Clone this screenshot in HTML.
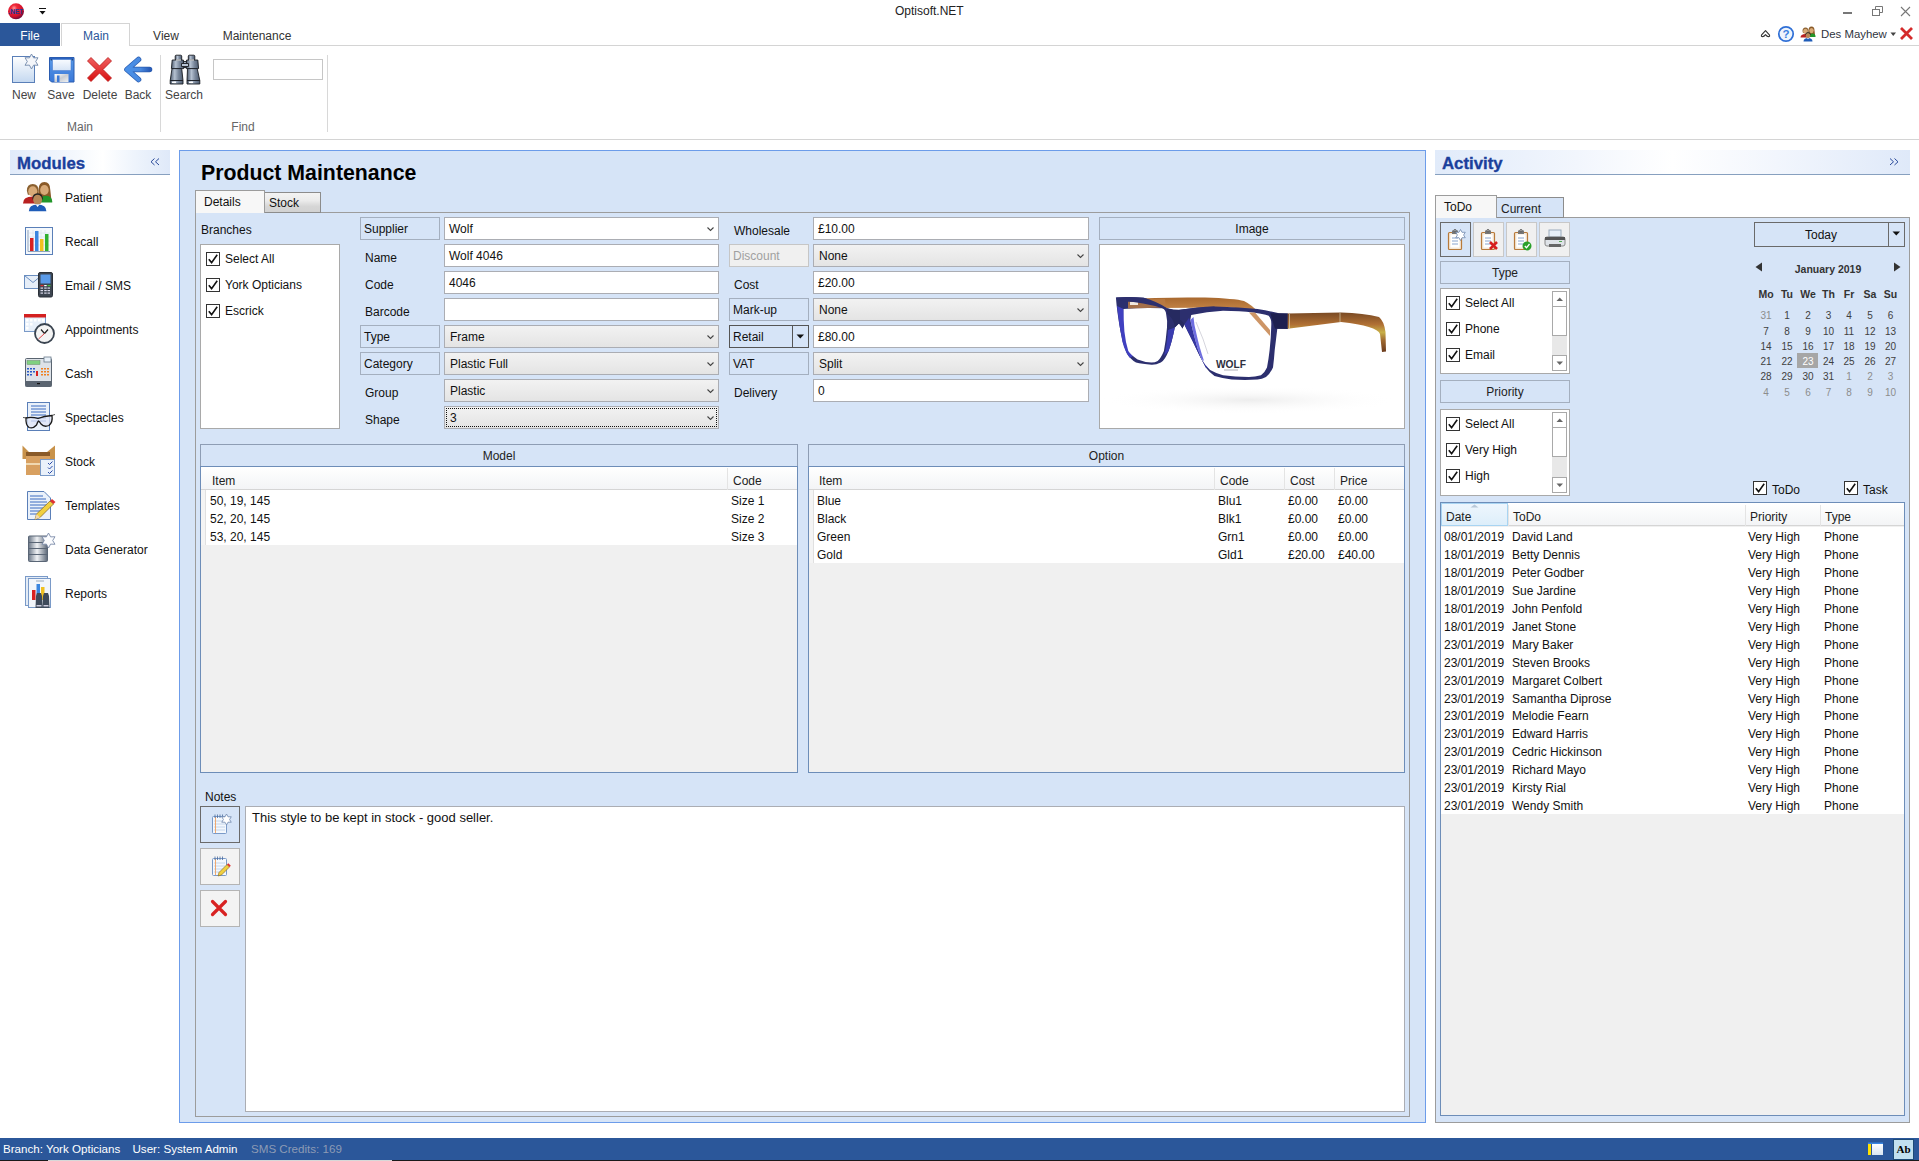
<!DOCTYPE html><html><head><meta charset="utf-8"><style>
html,body{margin:0;padding:0;}
body{width:1919px;height:1161px;position:relative;overflow:hidden;background:#fff;font-family:"Liberation Sans",sans-serif;}
div{position:absolute;box-sizing:border-box;}
.t{white-space:nowrap;font-family:"Liberation Sans",sans-serif;}
svg{overflow:visible}
</style></head><body>
<svg style="position:absolute;left:7px;top:1.5px" width="19" height="19" viewBox="0 0 19 19">
<defs><radialGradient id="gapp" cx="0.38" cy="0.3" r="0.75"><stop offset="0" stop-color="#ff9aa0"/><stop offset="0.25" stop-color="#f02a3a"/><stop offset="0.7" stop-color="#d0102a"/><stop offset="1" stop-color="#5a0a40"/></radialGradient></defs>
<circle cx="9" cy="9.3" r="8" fill="url(#gapp)"/>
<text x="8.8" y="12.2" font-family="Liberation Sans" font-size="7" font-weight="bold" fill="#24389a" text-anchor="middle" textLength="15" lengthAdjust="spacingAndGlyphs">.NET</text></svg>
<svg style="position:absolute;left:39px;top:8px" width="8" height="8" viewBox="0 0 8 8"><rect x="0" y="0" width="7" height="1" fill="#111"/><path d="M0.5 3 L6.5 3 L3.5 6.5 Z" fill="#111"/></svg>
<div class="t" style="left:895px;top:4.34px;font-size:12px;line-height:15px;color:#222;font-weight:normal;">Optisoft.NET</div>
<div style="left:1843px;top:12px;width:9px;height:2px;background:#777"></div>
<svg style="position:absolute;left:1872px;top:6px" width="11" height="11" viewBox="0 0 11 11"><rect x="0.5" y="3.5" width="7" height="6" fill="none" stroke="#777"/><path d="M3.5 3.5 V0.5 H10.5 V6.5 H7.5" fill="none" stroke="#777"/></svg>
<svg style="position:absolute;left:1900px;top:6px" width="12" height="11" viewBox="0 0 12 11"><path d="M1 1 L10 10 M10 1 L1 10" stroke="#777" stroke-width="1.1"/></svg>
<div style="left:0px;top:23px;width:60px;height:23px;background:#2b579a"></div>
<div class="t" style="left:0.0px;width:60px;text-align:center;top:29.34px;font-size:12px;line-height:15px;color:#fff;font-weight:normal;">File</div>
<div style="left:61px;top:23px;width:69px;height:23px;background:#fff;border:1px solid #d4d4d4;border-bottom:none"></div>
<div class="t" style="left:62.0px;width:68px;text-align:center;top:29.34px;font-size:12px;line-height:15px;color:#2b579a;font-weight:normal;">Main</div>
<div class="t" style="left:136.0px;width:60px;text-align:center;top:29.34px;font-size:12px;line-height:15px;color:#333;font-weight:normal;">View</div>
<div class="t" style="left:207.0px;width:100px;text-align:center;top:29.34px;font-size:12px;line-height:15px;color:#333;font-weight:normal;">Maintenance</div>
<div style="left:130px;top:45px;width:1789px;height:1px;background:#d4d4d4"></div>
<svg style="position:absolute;left:1760px;top:29px" width="12" height="10" viewBox="0 0 12 10"><path d="M1.6 5.9 L5.5 1.6 L9.4 5.9 Q10.2 7.6 8.4 7.6 Q7 7.6 5.5 5.6 Q4 7.6 2.6 7.6 Q0.8 7.6 1.6 5.9Z" fill="#fff" stroke="#333" stroke-width="1.1" stroke-linejoin="round"/></svg>
<svg style="position:absolute;left:1777px;top:25px" width="18" height="18" viewBox="0 0 18 18"><circle cx="9" cy="9" r="7.2" fill="#eef4fc" stroke="#2f6fd6" stroke-width="1.7"/><text x="9" y="13.3" font-family="Liberation Sans" font-size="11.5" font-weight="bold" fill="#3a7ee0" text-anchor="middle">?</text></svg>
<svg style="position:absolute;left:1800px;top:26px" width="16" height="16" viewBox="0 0 16 16"><path d="M2.5 5 Q2.5 1.5 5.5 1.5 Q8.5 1.5 8.5 5 L8 7 H3Z" fill="#8a6030"/><ellipse cx="5.5" cy="5.3" rx="2.3" ry="2.6" fill="#d8aa78"/><path d="M0.5 11.5 Q0.5 8 5.5 8 Q9 8 10 10 L9 11.5Z" fill="#b82020"/>
<path d="M8.5 4.5 Q8.5 0.5 11.5 0.5 Q14.5 0.5 14.5 4.5 L15 9 H8Z" fill="#8a5a28"/><ellipse cx="11.5" cy="4.6" rx="2.2" ry="2.6" fill="#d8aa78"/><path d="M9 10.5 Q10 7.5 12 7.5 Q15.5 7.5 15.5 10.5 V11H9Z" fill="#22962a"/>
<path d="M5.3 9.5 Q5.3 6.3 8 6.3 Q10.7 6.3 10.7 9.5Z" fill="#222"/><ellipse cx="8" cy="9.6" rx="2.3" ry="2.5" fill="#b88858"/><path d="M3.5 15.5 Q3.5 12 8 12 Q12.5 12 12.5 15.5Z" fill="#1f5cb8"/><path d="M7 12.1 L8 13.3 L9 12.1Z" fill="#fff"/></svg>
<div class="t" style="left:1821px;top:27.05px;font-size:11.4px;line-height:14px;color:#2f3440;font-weight:normal;">Des Mayhew</div>
<svg style="position:absolute;left:1890px;top:32px" width="7" height="5" viewBox="0 0 7 5"><path d="M0.5 0.5 H6 L3.25 4 Z" fill="#444"/></svg>
<svg style="position:absolute;left:1899px;top:26px" width="15" height="15" viewBox="0 0 15 15"><path d="M2 2 L13 13 M13 2 L2 13" stroke="#d42a2a" stroke-width="2.8"/></svg>
<div style="left:0px;top:139px;width:1919px;height:1px;background:#d4d4d4"></div>
<svg style="position:absolute;left:11px;top:53px" width="30" height="32" viewBox="0 0 30 32"><defs><linearGradient id="gnew" x1="0" y1="0" x2="0" y2="1"><stop offset="0" stop-color="#ffffff"/><stop offset="1" stop-color="#c4d8f0"/></linearGradient></defs>
<rect x="1.5" y="3.5" width="22" height="26" fill="url(#gnew)" stroke="#5a7fb8"/>
<path d="M20.50 1.00 L22.60 4.86 L27.00 4.75 L24.70 8.50 L27.00 12.25 L22.60 12.14 L20.50 16.00 L18.40 12.14 L14.00 12.25 L16.30 8.50 L14.00 4.75 L18.40 4.86Z" fill="#f4f6fa" stroke="#7088aa" stroke-width="0.9"/></svg>
<div class="t" style="left:4.0px;width:40px;text-align:center;top:88.34px;font-size:12px;line-height:15px;color:#444;font-weight:normal;">New</div>
<svg style="position:absolute;left:48px;top:56px" width="28" height="28" viewBox="0 0 28 28"><defs><linearGradient id="gsv" x1="0" y1="0" x2="0" y2="1"><stop offset="0" stop-color="#5a9ae8"/><stop offset="1" stop-color="#3a78d8"/></linearGradient>
<linearGradient id="gsvl" x1="0" y1="0" x2="0" y2="1"><stop offset="0" stop-color="#f8fbff"/><stop offset="1" stop-color="#d6e4f6"/></linearGradient>
<linearGradient id="gsvs" x1="0" y1="0" x2="1" y2="1"><stop offset="0" stop-color="#ffffff"/><stop offset="0.5" stop-color="#c8ccd2"/><stop offset="1" stop-color="#f0f2f4"/></linearGradient></defs>
<path d="M1.5 1.5 H26 V26 H3.5 L1.5 24Z" fill="url(#gsv)" stroke="#2a5cb0" stroke-width="1"/><rect x="2" y="2" width="23.5" height="1.6" fill="#2a62c0"/>
<rect x="4.5" y="3.6" width="18.5" height="11" fill="url(#gsvl)" stroke="#3a70c8" stroke-width="0.5"/>
<rect x="6.5" y="18" width="14" height="8" fill="url(#gsvs)"/><rect x="9" y="19.5" width="2.5" height="6.5" fill="#3a78d8"/>
<circle cx="3.3" cy="3.8" r="0.6" fill="#123"/><circle cx="24.3" cy="3.8" r="0.6" fill="#123"/></svg>
<div class="t" style="left:41.0px;width:40px;text-align:center;top:88.34px;font-size:12px;line-height:15px;color:#444;font-weight:normal;">Save</div>
<svg style="position:absolute;left:86px;top:56px" width="28" height="28" viewBox="0 0 28 28"><defs><linearGradient id="gdel" x1="0" y1="0" x2="0" y2="1"><stop offset="0" stop-color="#f06060"/><stop offset="1" stop-color="#d81010"/></linearGradient></defs><path d="M1.5 5 L5 1.5 L13.5 10 L22 1.5 L25.5 5 L17 13.5 L25.5 22 L22 25.5 L13.5 17 L5 25.5 L1.5 22 L10 13.5Z" fill="url(#gdel)" stroke="#b81818" stroke-width="0.8" stroke-linejoin="round"/></svg>
<div class="t" style="left:75.0px;width:50px;text-align:center;top:88.34px;font-size:12px;line-height:15px;color:#444;font-weight:normal;">Delete</div>
<svg style="position:absolute;left:123px;top:56px" width="30" height="28" viewBox="0 0 30 28"><defs><linearGradient id="gback" x1="0" y1="0" x2="1" y2="0"><stop offset="0" stop-color="#4a90e8"/><stop offset="0.6" stop-color="#4a8ae0"/><stop offset="1" stop-color="#2a5cb8"/></linearGradient></defs><path d="M26.5 13.5 H5 M15.5 3.5 L4 13.5 L15.5 23.5" fill="none" stroke="#2a5cb0" stroke-width="5.6" stroke-linecap="round" stroke-linejoin="round"/><path d="M26.5 13.5 H5 M15.5 3.5 L4 13.5 L15.5 23.5" fill="none" stroke="url(#gback)" stroke-width="4.2" stroke-linecap="round" stroke-linejoin="round"/></svg>
<div class="t" style="left:118.0px;width:40px;text-align:center;top:88.34px;font-size:12px;line-height:15px;color:#444;font-weight:normal;">Back</div>
<div style="left:160px;top:55px;width:1px;height:77px;background:#d8d8d8"></div>
<div class="t" style="left:50.0px;width:60px;text-align:center;top:120.34px;font-size:12px;line-height:15px;color:#666;font-weight:normal;">Main</div>
<svg style="position:absolute;left:169px;top:54px" width="33" height="32" viewBox="0 0 33 32"><defs><linearGradient id="gbin" x1="0" y1="0" x2="1" y2="0"><stop offset="0" stop-color="#4e5c70"/><stop offset="0.35" stop-color="#b4c0d0"/><stop offset="0.65" stop-color="#7a889c"/><stop offset="1" stop-color="#4e5c70"/></linearGradient></defs>
<g stroke="#1a1d22" stroke-width="0.9" stroke-linejoin="round">
<rect x="6.2" y="1.2" width="6.5" height="5" rx="1" fill="url(#gbin)"/><rect x="19.3" y="1.2" width="6.5" height="5" rx="1" fill="url(#gbin)"/>
<path d="M11 7.5 H21 V13.5 H11Z" fill="#9aa8ba"/>
<path d="M3.2 6 H14.4 L14.8 14.6 H2.4Z" fill="url(#gbin)"/><path d="M17.6 6 H28.8 L29.6 14.6 H17.2Z" fill="url(#gbin)"/>
<path d="M12.5 9.5 H19.5 V12.5 H12.5Z" fill="#b8c4d4"/>
<path d="M3 14.6 H12.7 L14 26.5 H1.2Z" fill="url(#gbin)"/><path d="M18.5 14.6 H28.2 L30.8 26.5 H18Z" fill="url(#gbin)"/>
<path d="M1.2 26.5 H14 V30 H1.2Z" fill="url(#gbin)"/><path d="M18 26.5 H30.8 V30 H18Z" fill="url(#gbin)"/>
</g>
<rect x="3" y="27.6" width="4" height="1.4" fill="#fff"/><rect x="20" y="27.6" width="4" height="1.4" fill="#fff"/>
<rect x="7" y="5.5" width="5" height="1" fill="#fff"/><rect x="20" y="5.5" width="5" height="1" fill="#fff"/></svg>
<div class="t" style="left:159.0px;width:50px;text-align:center;top:88.34px;font-size:12px;line-height:15px;color:#444;font-weight:normal;">Search</div>
<div style="left:213px;top:59px;width:110px;height:21px;background:#fff;border:1px solid #c6c6c6;box-sizing:border-box"></div>
<div style="left:327px;top:55px;width:1px;height:77px;background:#d8d8d8"></div>
<div class="t" style="left:213.0px;width:60px;text-align:center;top:120.34px;font-size:12px;line-height:15px;color:#666;font-weight:normal;">Find</div>
<div style="left:10px;top:150px;width:160px;height:25px;background:linear-gradient(90deg,#e1ebfa 0%,#f4f8fd 40%,#ffffff 58%,#eef4fc 78%,#dfe9f9 100%);border-bottom:1px solid #87a0bf"></div>
<div class="t" style="left:17px;top:153.18px;font-size:16.8px;line-height:21px;color:#1b3f9c;font-weight:bold;-webkit-text-stroke:0.35px #1b3f9c;">Modules</div>
<svg style="position:absolute;left:150px;top:158px" width="11" height="8" viewBox="0 0 11 8"><path d="M4.5 0.5 L1 3.8 L4.5 7 M9 0.5 L5.5 3.8 L9 7" fill="none" stroke="#2a4a9a" stroke-width="1"/></svg>
<svg style="position:absolute;left:22px;top:181px" width="33" height="32" viewBox="0 0 33 32"><g transform="scale(1.95)"><path d="M2.5 5 Q2.5 1.5 5.5 1.5 Q8.5 1.5 8.5 5 L8 7 H3Z" fill="#8a6030"/><ellipse cx="5.5" cy="5.3" rx="2.3" ry="2.6" fill="#d8aa78"/><path d="M0.5 11.5 Q0.5 8 5.5 8 Q9 8 10 10 L9 11.5Z" fill="#b82020"/>
<path d="M8.5 4.5 Q8.5 0.5 11.5 0.5 Q14.5 0.5 14.5 4.5 L15 9 H8Z" fill="#8a5a28"/><ellipse cx="11.5" cy="4.6" rx="2.2" ry="2.6" fill="#d8aa78"/><path d="M9 10.5 Q10 7.5 12 7.5 Q15.5 7.5 15.5 10.5 V11H9Z" fill="#22962a"/>
<path d="M5.3 9.5 Q5.3 6.3 8 6.3 Q10.7 6.3 10.7 9.5Z" fill="#222"/><ellipse cx="8" cy="9.6" rx="2.3" ry="2.5" fill="#b88858"/><path d="M3.5 15.5 Q3.5 12 8 12 Q12.5 12 12.5 15.5Z" fill="#1f5cb8"/><path d="M7 12.1 L8 13.3 L9 12.1Z" fill="#fff"/></g></svg>
<div class="t" style="left:65px;top:191.34px;font-size:12px;line-height:15px;color:#111;font-weight:normal;">Patient</div>
<svg style="position:absolute;left:25px;top:227px" width="28" height="28" viewBox="0 0 28 28"><rect x="0.5" y="0.5" width="27" height="27" fill="#f4f8fc" stroke="#5a7fb8"/>
<path d="M3 3 V24.5 H25" fill="none" stroke="#8fa3bd"/>
<g stroke="#dde6f0" stroke-width="0.8"><path d="M4 6H25M4 10H25M4 14H25M4 18H25M8 3V24M12 3V24M16 3V24M20 3V24"/></g>
<rect x="5" y="11" width="3.5" height="13" fill="#d82020"/><rect x="10" y="4" width="3.5" height="20" fill="#3a86e0"/><rect x="15" y="12" width="3.5" height="12" fill="#f0c020"/><rect x="20" y="7" width="3.5" height="17" fill="#30b030"/></svg>
<div class="t" style="left:65px;top:235.34px;font-size:12px;line-height:15px;color:#111;font-weight:normal;">Recall</div>
<svg style="position:absolute;left:23px;top:272px" width="32" height="26" viewBox="0 0 32 26"><rect x="1.5" y="3.5" width="17" height="13" fill="#e6eef8" stroke="#6a8ec0"/><path d="M1.5 3.5 L10 10.5 L18.5 3.5" fill="none" stroke="#6a8ec0"/>
<rect x="15.5" y="0.5" width="14" height="24.5" rx="1.5" fill="#3d4550" stroke="#2a3038"/><rect x="17.5" y="2.5" width="10" height="9" fill="#5a9ae8"/>
<rect x="17.5" y="13" width="3" height="1.2" fill="#e03030"/><rect x="21.2" y="13" width="2.5" height="1.2" fill="#fff"/><rect x="24.5" y="13" width="3" height="1.2" fill="#40c040"/>
<g fill="#dde"><rect x="17.5" y="15.5" width="2.5" height="1.2"/><rect x="21.2" y="15.5" width="2.5" height="1.2"/><rect x="24.5" y="15.5" width="2.5" height="1.2"/><rect x="17.5" y="18" width="2.5" height="1.2"/><rect x="21.2" y="18" width="2.5" height="1.2"/><rect x="24.5" y="18" width="2.5" height="1.2"/><rect x="17.5" y="20.5" width="2.5" height="1.2"/><rect x="21.2" y="20.5" width="2.5" height="1.2"/><rect x="24.5" y="20.5" width="2.5" height="1.2"/></g></svg>
<div class="t" style="left:65px;top:279.34px;font-size:12px;line-height:15px;color:#111;font-weight:normal;">Email / SMS</div>
<svg style="position:absolute;left:23px;top:313px" width="32" height="32" viewBox="0 0 32 32"><rect x="1.5" y="1.5" width="21" height="17" fill="#e8f0fa" stroke="#7a9ac8"/><rect x="1" y="1" width="22" height="3.5" fill="#d42020"/>
<g fill="#fff"><rect x="3" y="6" width="2.5" height="2.5"/><rect x="7" y="6" width="2.5" height="2.5"/><rect x="11" y="6" width="2.5" height="2.5"/><rect x="15" y="6" width="2.5" height="2.5"/><rect x="19" y="6" width="2.5" height="2.5"/><rect x="3" y="10" width="2.5" height="2.5"/><rect x="7" y="10" width="2.5" height="2.5"/><rect x="3" y="14" width="2.5" height="2.5"/></g>
<circle cx="21.5" cy="20.5" r="9.5" fill="#f4f4f4" stroke="#3a4450" stroke-width="1.8"/><path d="M21.5 20.5 L18 16.5 M21.5 20.5 L25 16.5" stroke="#222" stroke-width="1.2"/><path d="M21.5 20.5 L15.5 26" stroke="#e03030" stroke-width="0.9"/></svg>
<div class="t" style="left:65px;top:323.34px;font-size:12px;line-height:15px;color:#111;font-weight:normal;">Appointments</div>
<svg style="position:absolute;left:24px;top:357px" width="30" height="31" viewBox="0 0 30 31"><rect x="1.5" y="1.5" width="26" height="28" rx="1" fill="#dde2e8" stroke="#5a6470"/><rect x="20" y="0" width="7" height="5" fill="#e8f0f8" stroke="#6a7a8a" stroke-width="0.8"/>
<rect x="3" y="3.5" width="13" height="4" fill="#80d080" stroke="#6a8a6a" stroke-width="0.5"/><rect x="1.5" y="24" width="26" height="5.5" fill="#5a6470"/><rect x="13" y="26" width="3" height="1.2" fill="#111"/>
<g fill="#2a5ac8"><rect x="3" y="11" width="2" height="1.5"/><rect x="6" y="11" width="2" height="1.5"/><rect x="9" y="11" width="2" height="1.5"/><rect x="3" y="14" width="2" height="1.5"/><rect x="6" y="14" width="2" height="1.5"/><rect x="9" y="14" width="2" height="1.5"/><rect x="3" y="17" width="2" height="1.5"/><rect x="6" y="17" width="2" height="1.5"/></g>
<rect x="12" y="14" width="2" height="5" fill="#d82020"/>
<g fill="#f08020"><rect x="17" y="11" width="2" height="1.5"/><rect x="20" y="11" width="2" height="1.5"/><rect x="23" y="11" width="2" height="1.5"/><rect x="17" y="14" width="2" height="1.5"/><rect x="20" y="14" width="2" height="1.5"/><rect x="23" y="14" width="2" height="1.5"/><rect x="17" y="17" width="2" height="1.5"/><rect x="20" y="17" width="2" height="1.5"/><rect x="23" y="17" width="2" height="1.5"/></g></svg>
<div class="t" style="left:65px;top:367.34px;font-size:12px;line-height:15px;color:#111;font-weight:normal;">Cash</div>
<svg style="position:absolute;left:22px;top:402px" width="34" height="30" viewBox="0 0 34 30"><rect x="5.5" y="0.5" width="22" height="28" fill="#eaf1fa" stroke="#5a7fb8"/>
<g stroke="#3a6ac0" stroke-width="1"><path d="M9 4H24M9 7H24M9 10H24M9 13H24M9 16H24M9 19H24"/></g>
<path d="M1 15.5 L5 16 M28 14 L33 12.5" stroke="#555" stroke-width="1"/>
<path d="M4 16 Q10 14.5 16 16.5 Q22 14 30 13.5 Q31 20 27 23.5 Q22 25.5 19 22 Q17.5 19.5 16.5 19 Q15.5 20 14.5 23 Q11 27 7 25.5 Q3.5 23 4 16Z" fill="#dfe4f6" fill-opacity="0.75" stroke="#1a1a1a" stroke-width="1.3" stroke-linejoin="round"/></svg>
<div class="t" style="left:65px;top:411.34px;font-size:12px;line-height:15px;color:#111;font-weight:normal;">Spectacles</div>
<svg style="position:absolute;left:22px;top:445px" width="34" height="31" viewBox="0 0 34 31"><path d="M0.5 0.5 L7 7 H25 L33 0.5 V14 H0.5Z" fill="#c8924a"/><rect x="4" y="7" width="24" height="23" fill="#d8a060"/><rect x="4" y="7" width="24" height="4" fill="#8a5a28"/>
<rect x="4" y="18" width="24" height="2" fill="#f0d8b0"/>
<rect x="18.5" y="14.5" width="14" height="16" fill="#eaf1fa" stroke="#7a9ac8"/><path d="M26 18 l1.5 1.5 l3-3 M26 22.5 l1.5 1.5 l3-3 M26 27 l1.5 1.5 l3-3" fill="none" stroke="#2a4aa8" stroke-width="1"/></svg>
<div class="t" style="left:65px;top:455.34px;font-size:12px;line-height:15px;color:#111;font-weight:normal;">Stock</div>
<svg style="position:absolute;left:26px;top:490px" width="30" height="31" viewBox="0 0 30 31"><path d="M1.5 1.5 H18 L24.5 8 V29.5 H1.5Z" fill="#eaf1fa" stroke="#5a7fb8"/>
<g stroke="#3a6ac0" stroke-width="1"><path d="M4 6H17M4 9H20M4 12H21M4 15H21M4 18H21M4 21H15M4 24H12"/></g>
<path d="M9 29.5 L10.5 24 L24 11 L27.5 14 L14 27.5 Z" fill="#f0d040" stroke="#806020" stroke-width="0.7"/><path d="M24 11 L26 9 L29.5 12 L27.5 14Z" fill="#e03030"/><path d="M9 29.5 L10.5 24 L14 27.5Z" fill="#f0d8b0"/></svg>
<div class="t" style="left:65px;top:499.34px;font-size:12px;line-height:15px;color:#111;font-weight:normal;">Templates</div>
<svg style="position:absolute;left:27px;top:532px" width="30" height="31" viewBox="0 0 30 31"><defs><linearGradient id="gdb" x1="0" y1="0" x2="1" y2="0"><stop offset="0" stop-color="#6a7686"/><stop offset="0.45" stop-color="#f0f2f5"/><stop offset="1" stop-color="#5a6676"/></linearGradient></defs>
<rect x="1.5" y="4" width="19" height="25.5" rx="1" fill="url(#gdb)" stroke="#5a6676"/><path d="M1.5 10.5H20.5M1.5 16.5H20.5M1.5 22.5H20.5" stroke="#5a6676" stroke-width="1.2"/>
<path d="M21.50 1.00 L23.60 4.86 L28.00 4.75 L25.70 8.50 L28.00 12.25 L23.60 12.14 L21.50 16.00 L19.40 12.14 L15.00 12.25 L17.30 8.50 L15.00 4.75 L19.40 4.86Z" fill="#fbfcfe" stroke="#7a8aa8" stroke-width="0.9"/></svg>
<div class="t" style="left:65px;top:543.34px;font-size:12px;line-height:15px;color:#111;font-weight:normal;">Data Generator</div>
<svg style="position:absolute;left:25px;top:576px" width="30" height="33" viewBox="0 0 30 33"><rect x="0.5" y="0.5" width="22" height="29" fill="#e4ecf6" stroke="#7a9ac8"/><rect x="3.5" y="2.5" width="22" height="29" fill="#f2f6fb" stroke="#7a9ac8"/>
<rect x="7" y="14" width="3.5" height="10" fill="#d82020"/><rect x="11.5" y="8" width="3.5" height="16" fill="#3a86e0"/><rect x="16" y="11" width="3.5" height="13" fill="#f0c020"/><rect x="11" y="4.5" width="8" height="1" fill="#9ab"/>
<path d="M11 20 L12 17 H16 L17 20 L17.5 32 H10.5Z M18 20 L19 17 H23 L24 20 L24.5 32 H17.5Z" fill="#3e4a5a"/><rect x="11.5" y="29" width="5" height="1.5" fill="#ccd"/><rect x="18.5" y="29" width="5" height="1.5" fill="#ccd"/></svg>
<div class="t" style="left:65px;top:587.34px;font-size:12px;line-height:15px;color:#111;font-weight:normal;">Reports</div>
<div style="left:179px;top:150px;width:1247px;height:973px;background:#d6e4f7;border:1px solid #6c9cea"></div>
<div class="t" style="left:201px;top:160.12px;font-size:21.3px;line-height:27px;color:#000;font-weight:bold;">Product Maintenance</div>
<div style="left:195px;top:212px;width:1215px;height:905px;border:1px solid #9c9c9c"></div>
<div style="left:264px;top:192px;width:57px;height:21px;background:linear-gradient(#f3f3f3 0%,#ebebeb 40%,#d6d6d6 70%,#d2d2d2 100%);border:1px solid #8c8c8c"></div>
<div class="t" style="left:269px;top:196.34px;font-size:12px;line-height:15px;color:#111;font-weight:normal;">Stock</div>
<div style="left:195px;top:190px;width:70px;height:23px;background:#f7f7f7;border:1px solid #9c9c9c;border-bottom:none"></div>
<div class="t" style="left:204px;top:195.34px;font-size:12px;line-height:15px;color:#111;font-weight:normal;">Details</div>
<div class="t" style="left:201px;top:223.34px;font-size:12px;line-height:15px;color:#111;font-weight:normal;">Branches</div>
<div style="left:200px;top:244px;width:140px;height:185px;background:#fff;border:1px solid #a9a9a9"></div>
<svg style="position:absolute;left:206px;top:252px" width="14" height="14" viewBox="0 0 14 14"><rect x="0.5" y="0.5" width="13" height="13" fill="#fff" stroke="#333"/><path d="M2.8 7.2 L5.6 10.6 L11.2 2.8" fill="none" stroke="#111" stroke-width="1.6"/></svg>
<div class="t" style="left:225px;top:252.34px;font-size:12px;line-height:15px;color:#111;font-weight:normal;">Select All</div>
<svg style="position:absolute;left:206px;top:278px" width="14" height="14" viewBox="0 0 14 14"><rect x="0.5" y="0.5" width="13" height="13" fill="#fff" stroke="#333"/><path d="M2.8 7.2 L5.6 10.6 L11.2 2.8" fill="none" stroke="#111" stroke-width="1.6"/></svg>
<div class="t" style="left:225px;top:278.34px;font-size:12px;line-height:15px;color:#111;font-weight:normal;">York Opticians</div>
<svg style="position:absolute;left:206px;top:304px" width="14" height="14" viewBox="0 0 14 14"><rect x="0.5" y="0.5" width="13" height="13" fill="#fff" stroke="#333"/><path d="M2.8 7.2 L5.6 10.6 L11.2 2.8" fill="none" stroke="#111" stroke-width="1.6"/></svg>
<div class="t" style="left:225px;top:304.34px;font-size:12px;line-height:15px;color:#111;font-weight:normal;">Escrick</div>
<div style="left:360px;top:217px;width:80px;height:23px;background:#d6e4f7;border:1px solid #a4afbf"></div>
<div class="t" style="left:364px;top:222.34px;font-size:12px;line-height:15px;color:#111;font-weight:normal;">Supplier</div>
<div style="left:444px;top:217px;width:275px;height:23px;background:#fff;border:1px solid #abadb3"></div>
<div class="t" style="left:449px;top:222.34px;font-size:12px;line-height:15px;color:#111;font-weight:normal;">Wolf</div>
<svg style="position:absolute;left:707px;top:227px" width="8" height="5" viewBox="0 0 8 5"><path d="M0.5 0.5 L3.5 3.5 L6.5 0.5" fill="none" stroke="#444" stroke-width="1.1"/></svg>
<div class="t" style="left:365px;top:251.34px;font-size:12px;line-height:15px;color:#111;font-weight:normal;">Name</div>
<div style="left:444px;top:244px;width:275px;height:23px;background:#fff;border:1px solid #abadb3"></div>
<div class="t" style="left:449px;top:249.34px;font-size:12px;line-height:15px;color:#111;font-weight:normal;">Wolf 4046</div>
<div class="t" style="left:365px;top:278.34px;font-size:12px;line-height:15px;color:#111;font-weight:normal;">Code</div>
<div style="left:444px;top:271px;width:275px;height:23px;background:#fff;border:1px solid #abadb3"></div>
<div class="t" style="left:449px;top:276.34px;font-size:12px;line-height:15px;color:#111;font-weight:normal;">4046</div>
<div class="t" style="left:365px;top:305.34px;font-size:12px;line-height:15px;color:#111;font-weight:normal;">Barcode</div>
<div style="left:444px;top:298px;width:275px;height:23px;background:#fff;border:1px solid #abadb3"></div>
<div style="left:360px;top:325px;width:80px;height:23px;background:#d6e4f7;border:1px solid #a4afbf"></div>
<div class="t" style="left:364px;top:330.34px;font-size:12px;line-height:15px;color:#111;font-weight:normal;">Type</div>
<div style="left:444px;top:325px;width:275px;height:23px;background:linear-gradient(#f2f2f2,#e4e4e4);border:1px solid #abadb3"></div>
<div class="t" style="left:450px;top:330.34px;font-size:12px;line-height:15px;color:#111;font-weight:normal;">Frame</div>
<svg style="position:absolute;left:707px;top:335px" width="8" height="5" viewBox="0 0 8 5"><path d="M0.5 0.5 L3.5 3.5 L6.5 0.5" fill="none" stroke="#444" stroke-width="1.1"/></svg>
<div style="left:360px;top:352px;width:80px;height:23px;background:#d6e4f7;border:1px solid #a4afbf"></div>
<div class="t" style="left:364px;top:357.34px;font-size:12px;line-height:15px;color:#111;font-weight:normal;">Category</div>
<div style="left:444px;top:352px;width:275px;height:23px;background:linear-gradient(#f2f2f2,#e4e4e4);border:1px solid #abadb3"></div>
<div class="t" style="left:450px;top:357.34px;font-size:12px;line-height:15px;color:#111;font-weight:normal;">Plastic Full</div>
<svg style="position:absolute;left:707px;top:362px" width="8" height="5" viewBox="0 0 8 5"><path d="M0.5 0.5 L3.5 3.5 L6.5 0.5" fill="none" stroke="#444" stroke-width="1.1"/></svg>
<div class="t" style="left:365px;top:386.34px;font-size:12px;line-height:15px;color:#111;font-weight:normal;">Group</div>
<div style="left:444px;top:379px;width:275px;height:23px;background:linear-gradient(#f2f2f2,#e4e4e4);border:1px solid #abadb3"></div>
<div class="t" style="left:450px;top:384.34px;font-size:12px;line-height:15px;color:#111;font-weight:normal;">Plastic</div>
<svg style="position:absolute;left:707px;top:389px" width="8" height="5" viewBox="0 0 8 5"><path d="M0.5 0.5 L3.5 3.5 L6.5 0.5" fill="none" stroke="#444" stroke-width="1.1"/></svg>
<div class="t" style="left:365px;top:413.34px;font-size:12px;line-height:15px;color:#111;font-weight:normal;">Shape</div>
<div style="left:444px;top:406px;width:275px;height:23px;background:linear-gradient(#f2f2f2,#e4e4e4);border:1px solid #abadb3"></div>
<div style="left:446px;top:408px;width:271px;height:19px;border:1px dotted #111"></div>
<div class="t" style="left:450px;top:411.34px;font-size:12px;line-height:15px;color:#111;font-weight:normal;">3</div>
<svg style="position:absolute;left:707px;top:416px" width="8" height="5" viewBox="0 0 8 5"><path d="M0.5 0.5 L3.5 3.5 L6.5 0.5" fill="none" stroke="#444" stroke-width="1.1"/></svg>
<div class="t" style="left:734px;top:224.34px;font-size:12px;line-height:15px;color:#111;font-weight:normal;">Wholesale</div>
<div style="left:813px;top:217px;width:276px;height:23px;background:#fff;border:1px solid #abadb3"></div>
<div class="t" style="left:818px;top:222.34px;font-size:12px;line-height:15px;color:#111;font-weight:normal;">£10.00</div>
<div style="left:729px;top:244px;width:80px;height:23px;background:#f0f0f0;border:1px solid #c6c6c6"></div>
<div class="t" style="left:733px;top:249.34px;font-size:12px;line-height:15px;color:#a0a0a0;font-weight:normal;">Discount</div>
<div style="left:813px;top:244px;width:276px;height:23px;background:linear-gradient(#f2f2f2,#e4e4e4);border:1px solid #abadb3"></div>
<div class="t" style="left:819px;top:249.34px;font-size:12px;line-height:15px;color:#111;font-weight:normal;">None</div>
<svg style="position:absolute;left:1077px;top:254px" width="8" height="5" viewBox="0 0 8 5"><path d="M0.5 0.5 L3.5 3.5 L6.5 0.5" fill="none" stroke="#444" stroke-width="1.1"/></svg>
<div class="t" style="left:734px;top:278.34px;font-size:12px;line-height:15px;color:#111;font-weight:normal;">Cost</div>
<div style="left:813px;top:271px;width:276px;height:23px;background:#fff;border:1px solid #abadb3"></div>
<div class="t" style="left:818px;top:276.34px;font-size:12px;line-height:15px;color:#111;font-weight:normal;">£20.00</div>
<div style="left:729px;top:298px;width:80px;height:23px;background:#d6e4f7;border:1px solid #a4afbf"></div>
<div class="t" style="left:733px;top:303.34px;font-size:12px;line-height:15px;color:#111;font-weight:normal;">Mark-up</div>
<div style="left:813px;top:298px;width:276px;height:23px;background:linear-gradient(#f2f2f2,#e4e4e4);border:1px solid #abadb3"></div>
<div class="t" style="left:819px;top:303.34px;font-size:12px;line-height:15px;color:#111;font-weight:normal;">None</div>
<svg style="position:absolute;left:1077px;top:308px" width="8" height="5" viewBox="0 0 8 5"><path d="M0.5 0.5 L3.5 3.5 L6.5 0.5" fill="none" stroke="#444" stroke-width="1.1"/></svg>
<div style="left:729px;top:325px;width:80px;height:23px;background:#d6e4f7;border:1px solid #555"></div>
<div style="left:792px;top:325px;width:1px;height:23px;background:#555"></div>
<div class="t" style="left:733px;top:330.34px;font-size:12px;line-height:15px;color:#111;font-weight:normal;">Retail</div>
<svg style="position:absolute;left:796px;top:334px" width="9" height="5" viewBox="0 0 9 5"><path d="M0.5 0.5 H8 L4.25 4.5Z" fill="#111"/></svg>
<div style="left:813px;top:325px;width:276px;height:23px;background:#fff;border:1px solid #abadb3"></div>
<div class="t" style="left:818px;top:330.34px;font-size:12px;line-height:15px;color:#111;font-weight:normal;">£80.00</div>
<div style="left:729px;top:352px;width:80px;height:23px;background:#d6e4f7;border:1px solid #a4afbf"></div>
<div class="t" style="left:733px;top:357.34px;font-size:12px;line-height:15px;color:#111;font-weight:normal;">VAT</div>
<div style="left:813px;top:352px;width:276px;height:23px;background:linear-gradient(#f2f2f2,#e4e4e4);border:1px solid #abadb3"></div>
<div class="t" style="left:819px;top:357.34px;font-size:12px;line-height:15px;color:#111;font-weight:normal;">Split</div>
<svg style="position:absolute;left:1077px;top:362px" width="8" height="5" viewBox="0 0 8 5"><path d="M0.5 0.5 L3.5 3.5 L6.5 0.5" fill="none" stroke="#444" stroke-width="1.1"/></svg>
<div class="t" style="left:734px;top:386.34px;font-size:12px;line-height:15px;color:#111;font-weight:normal;">Delivery</div>
<div style="left:813px;top:379px;width:276px;height:23px;background:#fff;border:1px solid #abadb3"></div>
<div class="t" style="left:818px;top:384.34px;font-size:12px;line-height:15px;color:#111;font-weight:normal;">0</div>
<div style="left:1099px;top:217px;width:306px;height:23px;background:#d6e4f7;border:1px solid #a4afbf"></div>
<div class="t" style="left:1202.0px;width:100px;text-align:center;top:222.34px;font-size:12px;line-height:15px;color:#111;font-weight:normal;">Image</div>
<div style="left:1099px;top:244px;width:306px;height:185px;background:#fff;border:1px solid #a9a9a9"></div>
<svg style="position:absolute;left:1100px;top:250px" width="304" height="176" viewBox="0 0 304 176">
<defs>
<linearGradient id="gtmp1" x1="0" y1="0" x2="0" y2="1"><stop offset="0" stop-color="#a8682e"/><stop offset="0.45" stop-color="#d09050"/><stop offset="0.7" stop-color="#b06a34"/><stop offset="1" stop-color="#8a4a22"/></linearGradient>
<linearGradient id="gtmp2" x1="0" y1="0" x2="0" y2="1"><stop offset="0" stop-color="#7a4a24"/><stop offset="0.3" stop-color="#b07034"/><stop offset="0.5" stop-color="#c8b048"/><stop offset="0.7" stop-color="#a06a30"/><stop offset="1" stop-color="#6a3a1c"/></linearGradient>
<radialGradient id="gsh" cx="0.5" cy="0.5" r="0.5"><stop offset="0" stop-color="#ededed"/><stop offset="1" stop-color="#ffffff" stop-opacity="0"/></radialGradient>
</defs>
<ellipse cx="150" cy="150" rx="150" ry="14" fill="url(#gsh)"/>
<!-- far temple above / behind -->
<path d="M26 49 Q60 47 105 47.5 Q135 48.5 144 51 Q152 55 158 62 L172 84 L165 86 L150 64 Q142 58 130 57.5 L60 58 L26 59Z" fill="url(#gtmp1)"/>
<!-- left lens rim -->
<path d="M15.9 47.4 Q30 46.5 43.8 47.8 Q58 52 67 58.3 Q72 60 76.3 60.6 L80 59.8 L84.3 74.5 L82.5 78.4 Q80 74 78.6 73.8 L74.8 77.6 Q72 92 68.6 100.9 Q65 110 60.8 112.5 Q56 115 51.5 114.8 Q42 114 36 112.5 Q30 109 26.7 103.2 Q22 92 20.5 81.5 Q17 62 15.9 47.4Z" fill="#2c2f6e"/>
<path d="M17 56 Q19 75 22.5 92 Q25 102 30 108 L33 106 Q28 96 26 84 Q24 70 23.6 59Z" fill="#4040c0"/>
<path d="M74.8 77.6 Q72 92 68.6 100.9 L64 106 Q67 95 68 80Z" fill="#3a3cb0"/>
<!-- left lens white -->
<path d="M23.6 59 Q43 57.5 62.4 58.3 Q66 60 66.2 64.5 Q67.5 70 67 77.6 Q66 90 63.9 100.9 Q61 108 57.7 111 Q55 112.5 51.5 112.5 Q44 112 37.6 109.4 Q31 105 28.3 100.9 Q25.5 92 24.4 81.5 Q23.5 70 23.6 59Z" fill="#ffffff"/>
<!-- temple visible through left lens top -->
<path d="M28 50 L65 49 L66 57.5 L28 58.5Z" fill="#b87a44" fill-opacity="0.85"/>
<rect x="30" y="52" width="8" height="3" fill="#f0e8e0"/>
<path d="M15.9 47.4 Q30 46.5 43.8 47.8 Q58 52 67 58.3 L62.4 58.3 Q43 52 24 51.5Z" fill="#2c2f6e"/>
<!-- bridge -->
<path d="M67 58.3 Q75 60 80 59.8 Q98 57 114.5 56.4 L114 61 Q98 62 91 65 Q86 70 84.3 74.5 L82.5 78.4 Q80 74 78.6 73.8 L74.8 77.6 Q74 68 67 64Z" fill="#262a60"/>
<!-- right lens rim -->
<path d="M80 59.8 Q98 56.5 114.5 56.4 Q140 57 157.5 59 Q170 61 179 63.3 L188 63.5 L188 79 L177.3 78.8 Q176 90 174.7 100.3 Q174 110 173 117.5 Q170 124 166 127 Q162 129 157.5 129.6 Q145 130.5 131.7 129.6 Q122 128 114.5 126 Q109 122 105.8 117.5 Q99 105 92.9 91.7 Q88 82 84.3 74.5 Q82 70 80 70Z" fill="#2c2f6e"/>
<path d="M84.3 74.5 Q88 82 92.9 91.7 Q99 105 105.8 117.5 L110 119 Q101 104 96 90 Q92 80 89 68Z" fill="#3536a0"/>
<!-- right lens white -->
<path d="M91.2 65 Q107 61.5 123 60.7 Q140 61 153.2 62.4 Q163 63.5 168.7 65.8 Q171.5 69 171.3 74.5 Q171 88 169.6 100.3 Q168.5 110 167 117.5 Q164.5 123 161 125.3 Q155 127 148.9 127 Q135 127 123 125.3 Q116 123.5 110.1 120.1 Q105 115 101.5 108.9 Q97 98 94.6 87.4 Q92 78 90.3 70.1Z" fill="#ffffff"/>
<path d="M90.3 70.1 Q92 78 94.6 87.4 Q97 98 101.5 108.9 L104 111 Q99 96 96.5 84 Q94 75 93.5 67Z" fill="#4a4ad8" fill-opacity="0.8"/>
<path d="M96 72 Q104 90 108 104" fill="none" stroke="#aab" stroke-width="0.5"/>
<!-- far temple through right lens -->
<path d="M149 62.5 L155 62.5 L170 80 L170 86 Z" fill="#c07a40" fill-opacity="0.8"/>
<!-- hinge block -->
<path d="M170.4 63.3 L187.7 63.5 L187.7 78.8 L175 78.8 Q172 70 170.4 63.3Z" fill="#1e2050"/>
<!-- near temple -->
<path d="M187.7 63.5 L241 62.6 Q264 63.5 279 67 Q284 71 285.5 82 L286 101.5 L282 102 L280 84 Q277 76 241 72 L187.7 78.8Z" fill="url(#gtmp2)"/>
<path d="M189.5 64 L189.5 78.5 M240 62.8 L240 72" stroke="#d8d0b0" stroke-width="0.7"/>
<text x="116" y="117.5" font-family="Liberation Sans" font-size="10" font-weight="bold" fill="#2e3040" textLength="30" lengthAdjust="spacingAndGlyphs">WOLF</text>
<rect x="124" y="119.5" width="14" height="1" fill="#b0b0b8"/>
</svg>
<div style="left:200px;top:444px;width:598px;height:23px;background:#d6e4f7;border:1px solid #8e9db4;border-bottom:1px solid #6d8db8"></div>
<div class="t" style="left:399.0px;width:200px;text-align:center;top:449.34px;font-size:12px;line-height:15px;color:#222;font-weight:normal;">Model</div>
<div style="left:200px;top:466px;width:598px;height:307px;background:#f0f0f0;border:1px solid #6d8db8"></div>
<div style="left:201px;top:467px;width:596px;height:23px;background:linear-gradient(#ffffff,#f3f4f6);border-bottom:1px solid #d5d5d5"></div>
<div class="t" style="left:212px;top:474.34px;font-size:12px;line-height:15px;color:#222;font-weight:normal;">Item</div>
<div style="left:727px;top:468px;width:1px;height:22px;background:#e4e4e4"></div>
<div class="t" style="left:733px;top:474.34px;font-size:12px;line-height:15px;color:#222;font-weight:normal;">Code</div>
<div style="left:201px;top:490px;width:596px;height:55px;background:#fff"></div>
<div style="left:201px;top:490px;width:5px;height:55px;background:#f4f4f4;border-right:1px solid #e0e0e0"></div>
<div class="t" style="left:210px;top:494.34px;font-size:12px;line-height:15px;color:#111;font-weight:normal;">50, 19, 145</div>
<div class="t" style="left:731px;top:494.34px;font-size:12px;line-height:15px;color:#111;font-weight:normal;">Size 1</div>
<div class="t" style="left:210px;top:512.34px;font-size:12px;line-height:15px;color:#111;font-weight:normal;">52, 20, 145</div>
<div class="t" style="left:731px;top:512.34px;font-size:12px;line-height:15px;color:#111;font-weight:normal;">Size 2</div>
<div class="t" style="left:210px;top:530.34px;font-size:12px;line-height:15px;color:#111;font-weight:normal;">53, 20, 145</div>
<div class="t" style="left:731px;top:530.34px;font-size:12px;line-height:15px;color:#111;font-weight:normal;">Size 3</div>
<div style="left:808px;top:444px;width:597px;height:23px;background:#d6e4f7;border:1px solid #8e9db4;border-bottom:1px solid #6d8db8"></div>
<div class="t" style="left:1006.5px;width:200px;text-align:center;top:449.34px;font-size:12px;line-height:15px;color:#222;font-weight:normal;">Option</div>
<div style="left:808px;top:466px;width:597px;height:307px;background:#f0f0f0;border:1px solid #6d8db8"></div>
<div style="left:809px;top:467px;width:595px;height:23px;background:linear-gradient(#ffffff,#f3f4f6);border-bottom:1px solid #d5d5d5"></div>
<div class="t" style="left:819px;top:474.34px;font-size:12px;line-height:15px;color:#222;font-weight:normal;">Item</div>
<div style="left:1214px;top:468px;width:1px;height:22px;background:#e4e4e4"></div>
<div class="t" style="left:1220px;top:474.34px;font-size:12px;line-height:15px;color:#222;font-weight:normal;">Code</div>
<div style="left:1284px;top:468px;width:1px;height:22px;background:#e4e4e4"></div>
<div class="t" style="left:1290px;top:474.34px;font-size:12px;line-height:15px;color:#222;font-weight:normal;">Cost</div>
<div style="left:1334px;top:468px;width:1px;height:22px;background:#e4e4e4"></div>
<div class="t" style="left:1340px;top:474.34px;font-size:12px;line-height:15px;color:#222;font-weight:normal;">Price</div>
<div style="left:809px;top:490px;width:595px;height:73px;background:#fff"></div>
<div style="left:809px;top:490px;width:5px;height:73px;background:#f4f4f4;border-right:1px solid #e0e0e0"></div>
<div class="t" style="left:817px;top:494.34px;font-size:12px;line-height:15px;color:#111;font-weight:normal;">Blue</div>
<div class="t" style="left:1218px;top:494.34px;font-size:12px;line-height:15px;color:#111;font-weight:normal;">Blu1</div>
<div class="t" style="left:1288px;top:494.34px;font-size:12px;line-height:15px;color:#111;font-weight:normal;">£0.00</div>
<div class="t" style="left:1338px;top:494.34px;font-size:12px;line-height:15px;color:#111;font-weight:normal;">£0.00</div>
<div class="t" style="left:817px;top:512.34px;font-size:12px;line-height:15px;color:#111;font-weight:normal;">Black</div>
<div class="t" style="left:1218px;top:512.34px;font-size:12px;line-height:15px;color:#111;font-weight:normal;">Blk1</div>
<div class="t" style="left:1288px;top:512.34px;font-size:12px;line-height:15px;color:#111;font-weight:normal;">£0.00</div>
<div class="t" style="left:1338px;top:512.34px;font-size:12px;line-height:15px;color:#111;font-weight:normal;">£0.00</div>
<div class="t" style="left:817px;top:530.34px;font-size:12px;line-height:15px;color:#111;font-weight:normal;">Green</div>
<div class="t" style="left:1218px;top:530.34px;font-size:12px;line-height:15px;color:#111;font-weight:normal;">Grn1</div>
<div class="t" style="left:1288px;top:530.34px;font-size:12px;line-height:15px;color:#111;font-weight:normal;">£0.00</div>
<div class="t" style="left:1338px;top:530.34px;font-size:12px;line-height:15px;color:#111;font-weight:normal;">£0.00</div>
<div class="t" style="left:817px;top:548.34px;font-size:12px;line-height:15px;color:#111;font-weight:normal;">Gold</div>
<div class="t" style="left:1218px;top:548.34px;font-size:12px;line-height:15px;color:#111;font-weight:normal;">Gld1</div>
<div class="t" style="left:1288px;top:548.34px;font-size:12px;line-height:15px;color:#111;font-weight:normal;">£20.00</div>
<div class="t" style="left:1338px;top:548.34px;font-size:12px;line-height:15px;color:#111;font-weight:normal;">£40.00</div>
<div class="t" style="left:205px;top:790.34px;font-size:12px;line-height:15px;color:#111;font-weight:normal;">Notes</div>
<div style="left:200px;top:806px;width:40px;height:37px;background:#d6e4f7;border:1px solid #6a6a6a"></div>
<div style="left:200px;top:848px;width:40px;height:37px;background:#f3f3f3;border:1px solid #b4b4b4"></div>
<div style="left:200px;top:890px;width:40px;height:37px;background:#f3f3f3;border:1px solid #b4b4b4"></div>
<svg style="position:absolute;left:211px;top:814px" width="20" height="22" viewBox="0 0 20 22"><rect x="1.5" y="2.5" width="14" height="17" rx="1" fill="#f4f8fd" stroke="#7a9ac8"/><g stroke="#b8cce6" stroke-width="0.8"><path d="M3 7H14M3 10H14M3 13H14M3 16H14"/></g><path d="M4.5 3V19" stroke="#f0a060" stroke-width="0.9"/><g stroke="#4a6a9a" stroke-width="0.8"><path d="M4 0.5V4M6.5 0.5V4M9 0.5V4M11.5 0.5V4"/></g><path d="M15.50 0.00 L17.05 2.82 L20.26 2.75 L18.60 5.50 L20.26 8.25 L17.05 8.18 L15.50 11.00 L13.95 8.18 L10.74 8.25 L12.40 5.50 L10.74 2.75 L13.95 2.82Z" fill="#fff" stroke="#6d86ad" stroke-width="0.8"/></svg>
<svg style="position:absolute;left:211px;top:856px" width="20" height="22" viewBox="0 0 20 22"><rect x="1.5" y="2.5" width="14" height="17" rx="1" fill="#f4f8fd" stroke="#7a9ac8"/><g stroke="#b8cce6" stroke-width="0.8"><path d="M3 7H14M3 10H14M3 13H14M3 16H14"/></g><path d="M4.5 3V19" stroke="#f0a060" stroke-width="0.9"/><g stroke="#4a6a9a" stroke-width="0.8"><path d="M4 0.5V4M6.5 0.5V4M9 0.5V4M11.5 0.5V4"/></g><path d="M7 20 L8 16.5 L16 8.5 L18.5 11 L10.5 19 Z" fill="#f0d040" stroke="#806020" stroke-width="0.6"/><path d="M16 8.5 L17.3 7.2 L19.8 9.7 L18.5 11Z" fill="#e03030"/></svg>
<svg style="position:absolute;left:210px;top:899px" width="18" height="18" viewBox="0 0 18 18"><path d="M2.5 2.5 L15.5 15.5 M15.5 2.5 L2.5 15.5" stroke="#d82222" stroke-width="3.2" stroke-linecap="round"/></svg>
<div style="left:245px;top:806px;width:1160px;height:306px;background:#fff;border:1px solid #abadb3"></div>
<div class="t" style="left:252px;top:809.5px;font-size:13px;line-height:16px;color:#111;font-weight:normal;">This style to be kept in stock - good seller.</div>
<div style="left:1435px;top:150px;width:475px;height:25px;background:linear-gradient(90deg,#e1ebfa 0%,#f2f6fd 30%,#ffffff 50%,#f2f6fd 72%,#dfe9f9 100%);border-bottom:1px solid #87a0bf"></div>
<div class="t" style="left:1442px;top:153.18px;font-size:16.8px;line-height:21px;color:#1b3f9c;font-weight:bold;-webkit-text-stroke:0.35px #1b3f9c;">Activity</div>
<svg style="position:absolute;left:1889px;top:158px" width="11" height="8" viewBox="0 0 11 8"><path d="M1 0.5 L4.5 3.8 L1 7 M5.5 0.5 L9 3.8 L5.5 7" fill="none" stroke="#2a4a9a" stroke-width="1"/></svg>
<div style="left:1435px;top:217px;width:475px;height:906px;background:#d6e4f7;border:1px solid #9c9c9c"></div>
<div style="left:1496px;top:197px;width:68px;height:21px;background:#d6e4f7;border:1px solid #8c8c8c"></div>
<div class="t" style="left:1501px;top:201.84px;font-size:12px;line-height:15px;color:#222;font-weight:normal;">Current</div>
<div style="left:1435px;top:195px;width:62px;height:23px;background:#f7f7f7;border:1px solid #9c9c9c;border-bottom:none"></div>
<div class="t" style="left:1444px;top:200.34px;font-size:12px;line-height:15px;color:#111;font-weight:normal;">ToDo</div>
<div style="left:1440px;top:222px;width:31px;height:35px;background:#d6e4f7;border:1px solid #6a6a6a"></div>
<div style="left:1473px;top:222px;width:31px;height:35px;background:#f0f0f0;border:1px solid #c8c8c8"></div>
<div style="left:1506px;top:222px;width:31px;height:35px;background:#f0f0f0;border:1px solid #c8c8c8"></div>
<div style="left:1539px;top:222px;width:31px;height:35px;background:#f0f0f0;border:1px solid #c8c8c8"></div>
<svg style="position:absolute;left:1446px;top:229px" width="20" height="22" viewBox="0 0 20 22"><rect x="2.5" y="3.5" width="13" height="17" rx="1" fill="#f4e8d8" stroke="#b87a3a" stroke-width="1.2"/><rect x="4.5" y="5.5" width="9" height="13" fill="#fff"/><path d="M6 1.5 H12 V5 H6Z" fill="#777"/><circle cx="9" cy="1.8" r="1.3" fill="none" stroke="#666"/><g stroke="#7a9ac8" stroke-width="0.9"><path d="M6 9H12M6 12H12M6 15H12"/></g><path d="M14.50 0.50 L16.05 3.32 L19.26 3.25 L17.60 6.00 L19.26 8.75 L16.05 8.68 L14.50 11.50 L12.95 8.68 L9.74 8.75 L11.40 6.00 L9.74 3.25 L12.95 3.32Z" fill="#fff" stroke="#6d86ad" stroke-width="0.8"/></svg>
<svg style="position:absolute;left:1479px;top:229px" width="20" height="22" viewBox="0 0 20 22"><rect x="2.5" y="3.5" width="13" height="17" rx="1" fill="#f4e8d8" stroke="#b87a3a" stroke-width="1.2"/><rect x="4.5" y="5.5" width="9" height="13" fill="#fff"/><path d="M6 1.5 H12 V5 H6Z" fill="#777"/><circle cx="9" cy="1.8" r="1.3" fill="none" stroke="#666"/><g stroke="#7a9ac8" stroke-width="0.9"><path d="M6 9H12M6 12H12M6 15H12"/></g><path d="M11 13 L18 20 M18 13 L11 20" stroke="#d61e1e" stroke-width="2.6"/></svg>
<svg style="position:absolute;left:1512px;top:229px" width="20" height="22" viewBox="0 0 20 22"><rect x="2.5" y="3.5" width="13" height="17" rx="1" fill="#f4e8d8" stroke="#b87a3a" stroke-width="1.2"/><rect x="4.5" y="5.5" width="9" height="13" fill="#fff"/><path d="M6 1.5 H12 V5 H6Z" fill="#777"/><circle cx="9" cy="1.8" r="1.3" fill="none" stroke="#666"/><g stroke="#7a9ac8" stroke-width="0.9"><path d="M6 9H12M6 12H12M6 15H12"/></g><circle cx="15" cy="17" r="4.5" fill="#2aa02a"/><path d="M12.8 17 L14.5 18.8 L17.5 15" fill="none" stroke="#fff" stroke-width="1.3"/></svg>
<svg style="position:absolute;left:1544px;top:229px" width="22" height="22" viewBox="0 0 22 22"><rect x="5" y="1" width="12" height="7" fill="#e8f0f8" stroke="#9ab"/><rect x="1" y="8" width="20" height="9" rx="2" fill="#dfe3e8" stroke="#888"/><rect x="1" y="8" width="20" height="3" fill="#555"/><rect x="5" y="15" width="12" height="3" fill="#666"/><rect x="15" y="12" width="3" height="1" fill="#5a5"/></svg>
<div style="left:1440px;top:261px;width:130px;height:23px;background:#d6e4f7;border:1px solid #a4afbf"></div>
<div class="t" style="left:1440.0px;width:130px;text-align:center;top:266.34px;font-size:12px;line-height:15px;color:#222;font-weight:normal;">Type</div>
<div style="left:1440px;top:288px;width:130px;height:86px;background:#fff;border:1px solid #a9a9a9"></div>
<div style="left:1552px;top:291px;width:15px;height:80px;background:#e8e8e8"></div>
<div style="left:1552px;top:291px;width:15px;height:16px;background:#fff;border:1px solid #a9a9a9"></div>
<svg style="position:absolute;left:1556px;top:297px" width="8" height="5" viewBox="0 0 8 5"><path d="M0.5 4 L3.75 0.5 L7 4Z" fill="#666"/></svg>
<div style="left:1552px;top:307px;width:15px;height:29px;background:#fff;border:1px solid #a9a9a9;border-top:none"></div>
<div style="left:1552px;top:355px;width:15px;height:16px;background:#fff;border:1px solid #a9a9a9"></div>
<svg style="position:absolute;left:1556px;top:361px" width="8" height="5" viewBox="0 0 8 5"><path d="M0.5 0.5 L3.75 4 L7 0.5Z" fill="#666"/></svg>
<svg style="position:absolute;left:1446px;top:296px" width="14" height="14" viewBox="0 0 14 14"><rect x="0.5" y="0.5" width="13" height="13" fill="#fff" stroke="#333"/><path d="M2.8 7.2 L5.6 10.6 L11.2 2.8" fill="none" stroke="#111" stroke-width="1.6"/></svg>
<div class="t" style="left:1465px;top:296.34px;font-size:12px;line-height:15px;color:#111;font-weight:normal;">Select All</div>
<svg style="position:absolute;left:1446px;top:322px" width="14" height="14" viewBox="0 0 14 14"><rect x="0.5" y="0.5" width="13" height="13" fill="#fff" stroke="#333"/><path d="M2.8 7.2 L5.6 10.6 L11.2 2.8" fill="none" stroke="#111" stroke-width="1.6"/></svg>
<div class="t" style="left:1465px;top:322.34px;font-size:12px;line-height:15px;color:#111;font-weight:normal;">Phone</div>
<svg style="position:absolute;left:1446px;top:348px" width="14" height="14" viewBox="0 0 14 14"><rect x="0.5" y="0.5" width="13" height="13" fill="#fff" stroke="#333"/><path d="M2.8 7.2 L5.6 10.6 L11.2 2.8" fill="none" stroke="#111" stroke-width="1.6"/></svg>
<div class="t" style="left:1465px;top:348.34px;font-size:12px;line-height:15px;color:#111;font-weight:normal;">Email</div>
<div style="left:1440px;top:380px;width:130px;height:23px;background:#d6e4f7;border:1px solid #a4afbf"></div>
<div class="t" style="left:1440.0px;width:130px;text-align:center;top:385.34px;font-size:12px;line-height:15px;color:#222;font-weight:normal;">Priority</div>
<div style="left:1440px;top:409px;width:130px;height:87px;background:#fff;border:1px solid #a9a9a9"></div>
<div style="left:1552px;top:412px;width:15px;height:81px;background:#e8e8e8"></div>
<div style="left:1552px;top:412px;width:15px;height:16px;background:#fff;border:1px solid #a9a9a9"></div>
<svg style="position:absolute;left:1556px;top:418px" width="8" height="5" viewBox="0 0 8 5"><path d="M0.5 4 L3.75 0.5 L7 4Z" fill="#666"/></svg>
<div style="left:1552px;top:428px;width:15px;height:29px;background:#fff;border:1px solid #a9a9a9;border-top:none"></div>
<div style="left:1552px;top:477px;width:15px;height:16px;background:#fff;border:1px solid #a9a9a9"></div>
<svg style="position:absolute;left:1556px;top:483px" width="8" height="5" viewBox="0 0 8 5"><path d="M0.5 0.5 L3.75 4 L7 0.5Z" fill="#666"/></svg>
<svg style="position:absolute;left:1446px;top:417px" width="14" height="14" viewBox="0 0 14 14"><rect x="0.5" y="0.5" width="13" height="13" fill="#fff" stroke="#333"/><path d="M2.8 7.2 L5.6 10.6 L11.2 2.8" fill="none" stroke="#111" stroke-width="1.6"/></svg>
<div class="t" style="left:1465px;top:417.34px;font-size:12px;line-height:15px;color:#111;font-weight:normal;">Select All</div>
<svg style="position:absolute;left:1446px;top:443px" width="14" height="14" viewBox="0 0 14 14"><rect x="0.5" y="0.5" width="13" height="13" fill="#fff" stroke="#333"/><path d="M2.8 7.2 L5.6 10.6 L11.2 2.8" fill="none" stroke="#111" stroke-width="1.6"/></svg>
<div class="t" style="left:1465px;top:443.34px;font-size:12px;line-height:15px;color:#111;font-weight:normal;">Very High</div>
<svg style="position:absolute;left:1446px;top:469px" width="14" height="14" viewBox="0 0 14 14"><rect x="0.5" y="0.5" width="13" height="13" fill="#fff" stroke="#333"/><path d="M2.8 7.2 L5.6 10.6 L11.2 2.8" fill="none" stroke="#111" stroke-width="1.6"/></svg>
<div class="t" style="left:1465px;top:469.34px;font-size:12px;line-height:15px;color:#111;font-weight:normal;">High</div>
<div style="left:1754px;top:222px;width:151px;height:25px;background:#d6e4f7;border:1px solid #6a6a6a"></div>
<div style="left:1888px;top:222px;width:1px;height:25px;background:#6a6a6a"></div>
<div class="t" style="left:1781.0px;width:80px;text-align:center;top:228.34px;font-size:12px;line-height:15px;color:#111;font-weight:normal;">Today</div>
<svg style="position:absolute;left:1892px;top:231px" width="9" height="5" viewBox="0 0 9 5"><path d="M0.5 0.5 H8 L4.25 4.5Z" fill="#111"/></svg>
<svg style="position:absolute;left:1755px;top:262px" width="8" height="10" viewBox="0 0 8 10"><path d="M7 0.5 V9.5 L0.5 5Z" fill="#333"/></svg>
<svg style="position:absolute;left:1893px;top:262px" width="8" height="10" viewBox="0 0 8 10"><path d="M1 0.5 V9.5 L7.5 5Z" fill="#333"/></svg>
<div class="t" style="left:1768.0px;width:120px;text-align:center;top:262.86px;font-size:10.5px;line-height:13px;color:#333;font-weight:bold;">January 2019</div>
<div class="t" style="left:1751.0px;width:30px;text-align:center;top:288.36px;font-size:10.5px;line-height:13px;color:#333;font-weight:bold;">Mo</div>
<div class="t" style="left:1772.0px;width:30px;text-align:center;top:288.36px;font-size:10.5px;line-height:13px;color:#333;font-weight:bold;">Tu</div>
<div class="t" style="left:1793.0px;width:30px;text-align:center;top:288.36px;font-size:10.5px;line-height:13px;color:#333;font-weight:bold;">We</div>
<div class="t" style="left:1813.5px;width:30px;text-align:center;top:288.36px;font-size:10.5px;line-height:13px;color:#333;font-weight:bold;">Th</div>
<div class="t" style="left:1834.0px;width:30px;text-align:center;top:288.36px;font-size:10.5px;line-height:13px;color:#333;font-weight:bold;">Fr</div>
<div class="t" style="left:1855.0px;width:30px;text-align:center;top:288.36px;font-size:10.5px;line-height:13px;color:#333;font-weight:bold;">Sa</div>
<div class="t" style="left:1875.5px;width:30px;text-align:center;top:288.36px;font-size:10.5px;line-height:13px;color:#333;font-weight:bold;">Su</div>
<div style="left:1797px;top:353px;width:21px;height:15px;background:#a6a6a6"></div>
<div class="t" style="left:1751.0px;width:30px;text-align:center;top:309.54px;font-size:10px;line-height:12px;color:#8c8c8c;font-weight:normal;">31</div>
<div class="t" style="left:1772.0px;width:30px;text-align:center;top:309.54px;font-size:10px;line-height:12px;color:#404040;font-weight:normal;">1</div>
<div class="t" style="left:1793.0px;width:30px;text-align:center;top:309.54px;font-size:10px;line-height:12px;color:#404040;font-weight:normal;">2</div>
<div class="t" style="left:1813.5px;width:30px;text-align:center;top:309.54px;font-size:10px;line-height:12px;color:#404040;font-weight:normal;">3</div>
<div class="t" style="left:1834.0px;width:30px;text-align:center;top:309.54px;font-size:10px;line-height:12px;color:#404040;font-weight:normal;">4</div>
<div class="t" style="left:1855.0px;width:30px;text-align:center;top:309.54px;font-size:10px;line-height:12px;color:#404040;font-weight:normal;">5</div>
<div class="t" style="left:1875.5px;width:30px;text-align:center;top:309.54px;font-size:10px;line-height:12px;color:#404040;font-weight:normal;">6</div>
<div class="t" style="left:1751.0px;width:30px;text-align:center;top:325.54px;font-size:10px;line-height:12px;color:#404040;font-weight:normal;">7</div>
<div class="t" style="left:1772.0px;width:30px;text-align:center;top:325.54px;font-size:10px;line-height:12px;color:#404040;font-weight:normal;">8</div>
<div class="t" style="left:1793.0px;width:30px;text-align:center;top:325.54px;font-size:10px;line-height:12px;color:#404040;font-weight:normal;">9</div>
<div class="t" style="left:1813.5px;width:30px;text-align:center;top:325.54px;font-size:10px;line-height:12px;color:#404040;font-weight:normal;">10</div>
<div class="t" style="left:1834.0px;width:30px;text-align:center;top:325.54px;font-size:10px;line-height:12px;color:#404040;font-weight:normal;">11</div>
<div class="t" style="left:1855.0px;width:30px;text-align:center;top:325.54px;font-size:10px;line-height:12px;color:#404040;font-weight:normal;">12</div>
<div class="t" style="left:1875.5px;width:30px;text-align:center;top:325.54px;font-size:10px;line-height:12px;color:#404040;font-weight:normal;">13</div>
<div class="t" style="left:1751.0px;width:30px;text-align:center;top:340.54px;font-size:10px;line-height:12px;color:#404040;font-weight:normal;">14</div>
<div class="t" style="left:1772.0px;width:30px;text-align:center;top:340.54px;font-size:10px;line-height:12px;color:#404040;font-weight:normal;">15</div>
<div class="t" style="left:1793.0px;width:30px;text-align:center;top:340.54px;font-size:10px;line-height:12px;color:#404040;font-weight:normal;">16</div>
<div class="t" style="left:1813.5px;width:30px;text-align:center;top:340.54px;font-size:10px;line-height:12px;color:#404040;font-weight:normal;">17</div>
<div class="t" style="left:1834.0px;width:30px;text-align:center;top:340.54px;font-size:10px;line-height:12px;color:#404040;font-weight:normal;">18</div>
<div class="t" style="left:1855.0px;width:30px;text-align:center;top:340.54px;font-size:10px;line-height:12px;color:#404040;font-weight:normal;">19</div>
<div class="t" style="left:1875.5px;width:30px;text-align:center;top:340.54px;font-size:10px;line-height:12px;color:#404040;font-weight:normal;">20</div>
<div class="t" style="left:1751.0px;width:30px;text-align:center;top:355.54px;font-size:10px;line-height:12px;color:#404040;font-weight:normal;">21</div>
<div class="t" style="left:1772.0px;width:30px;text-align:center;top:355.54px;font-size:10px;line-height:12px;color:#404040;font-weight:normal;">22</div>
<div class="t" style="left:1793.0px;width:30px;text-align:center;top:355.54px;font-size:10px;line-height:12px;color:#fff;font-weight:normal;">23</div>
<div class="t" style="left:1813.5px;width:30px;text-align:center;top:355.54px;font-size:10px;line-height:12px;color:#404040;font-weight:normal;">24</div>
<div class="t" style="left:1834.0px;width:30px;text-align:center;top:355.54px;font-size:10px;line-height:12px;color:#404040;font-weight:normal;">25</div>
<div class="t" style="left:1855.0px;width:30px;text-align:center;top:355.54px;font-size:10px;line-height:12px;color:#404040;font-weight:normal;">26</div>
<div class="t" style="left:1875.5px;width:30px;text-align:center;top:355.54px;font-size:10px;line-height:12px;color:#404040;font-weight:normal;">27</div>
<div class="t" style="left:1751.0px;width:30px;text-align:center;top:370.54px;font-size:10px;line-height:12px;color:#404040;font-weight:normal;">28</div>
<div class="t" style="left:1772.0px;width:30px;text-align:center;top:370.54px;font-size:10px;line-height:12px;color:#404040;font-weight:normal;">29</div>
<div class="t" style="left:1793.0px;width:30px;text-align:center;top:370.54px;font-size:10px;line-height:12px;color:#404040;font-weight:normal;">30</div>
<div class="t" style="left:1813.5px;width:30px;text-align:center;top:370.54px;font-size:10px;line-height:12px;color:#404040;font-weight:normal;">31</div>
<div class="t" style="left:1834.0px;width:30px;text-align:center;top:370.54px;font-size:10px;line-height:12px;color:#8c8c8c;font-weight:normal;">1</div>
<div class="t" style="left:1855.0px;width:30px;text-align:center;top:370.54px;font-size:10px;line-height:12px;color:#8c8c8c;font-weight:normal;">2</div>
<div class="t" style="left:1875.5px;width:30px;text-align:center;top:370.54px;font-size:10px;line-height:12px;color:#8c8c8c;font-weight:normal;">3</div>
<div class="t" style="left:1751.0px;width:30px;text-align:center;top:386.54px;font-size:10px;line-height:12px;color:#8c8c8c;font-weight:normal;">4</div>
<div class="t" style="left:1772.0px;width:30px;text-align:center;top:386.54px;font-size:10px;line-height:12px;color:#8c8c8c;font-weight:normal;">5</div>
<div class="t" style="left:1793.0px;width:30px;text-align:center;top:386.54px;font-size:10px;line-height:12px;color:#8c8c8c;font-weight:normal;">6</div>
<div class="t" style="left:1813.5px;width:30px;text-align:center;top:386.54px;font-size:10px;line-height:12px;color:#8c8c8c;font-weight:normal;">7</div>
<div class="t" style="left:1834.0px;width:30px;text-align:center;top:386.54px;font-size:10px;line-height:12px;color:#8c8c8c;font-weight:normal;">8</div>
<div class="t" style="left:1855.0px;width:30px;text-align:center;top:386.54px;font-size:10px;line-height:12px;color:#8c8c8c;font-weight:normal;">9</div>
<div class="t" style="left:1875.5px;width:30px;text-align:center;top:386.54px;font-size:10px;line-height:12px;color:#8c8c8c;font-weight:normal;">10</div>
<svg style="position:absolute;left:1753px;top:481px" width="14" height="14" viewBox="0 0 14 14"><rect x="0.5" y="0.5" width="13" height="13" fill="#fff" stroke="#333"/><path d="M2.8 7.2 L5.6 10.6 L11.2 2.8" fill="none" stroke="#111" stroke-width="1.6"/></svg>
<div class="t" style="left:1772px;top:483.34px;font-size:12px;line-height:15px;color:#111;font-weight:normal;">ToDo</div>
<svg style="position:absolute;left:1844px;top:481px" width="14" height="14" viewBox="0 0 14 14"><rect x="0.5" y="0.5" width="13" height="13" fill="#fff" stroke="#333"/><path d="M2.8 7.2 L5.6 10.6 L11.2 2.8" fill="none" stroke="#111" stroke-width="1.6"/></svg>
<div class="t" style="left:1863px;top:483.34px;font-size:12px;line-height:15px;color:#111;font-weight:normal;">Task</div>
<div style="left:1440px;top:502px;width:465px;height:614px;background:#f0f0f0;border:1px solid #6d8db8"></div>
<div style="left:1441px;top:503px;width:463px;height:23px;background:linear-gradient(#ffffff,#f3f4f6);border-bottom:1px solid #d5d5d5"></div>
<div style="left:1441px;top:503px;width:67px;height:23px;background:linear-gradient(#eef6fd,#ddeefa);border:1px solid #a8d4f2"></div>
<svg style="position:absolute;left:1470px;top:504px" width="9" height="4" viewBox="0 0 9 4"><path d="M0.5 3.5 L4.5 0.5 L8.5 3.5Z" fill="#b8c8d8"/></svg>
<div class="t" style="left:1446px;top:510.34px;font-size:12px;line-height:15px;color:#222;font-weight:normal;">Date</div>
<div style="left:1508px;top:505px;width:1px;height:21px;background:#e4e4e4"></div>
<div class="t" style="left:1513px;top:510.34px;font-size:12px;line-height:15px;color:#222;font-weight:normal;">ToDo</div>
<div style="left:1745px;top:505px;width:1px;height:21px;background:#e4e4e4"></div>
<div class="t" style="left:1750px;top:510.34px;font-size:12px;line-height:15px;color:#222;font-weight:normal;">Priority</div>
<div style="left:1820px;top:505px;width:1px;height:21px;background:#e4e4e4"></div>
<div class="t" style="left:1825px;top:510.34px;font-size:12px;line-height:15px;color:#222;font-weight:normal;">Type</div>
<div style="left:1441px;top:527px;width:463px;height:287px;background:#fff"></div>
<div class="t" style="left:1444px;top:530.34px;font-size:12px;line-height:15px;color:#111;font-weight:normal;">08/01/2019</div>
<div class="t" style="left:1512px;top:530.34px;font-size:12px;line-height:15px;color:#111;font-weight:normal;">David Land</div>
<div class="t" style="left:1748px;top:530.34px;font-size:12px;line-height:15px;color:#111;font-weight:normal;">Very High</div>
<div class="t" style="left:1824px;top:530.34px;font-size:12px;line-height:15px;color:#111;font-weight:normal;">Phone</div>
<div class="t" style="left:1444px;top:548.34px;font-size:12px;line-height:15px;color:#111;font-weight:normal;">18/01/2019</div>
<div class="t" style="left:1512px;top:548.34px;font-size:12px;line-height:15px;color:#111;font-weight:normal;">Betty Dennis</div>
<div class="t" style="left:1748px;top:548.34px;font-size:12px;line-height:15px;color:#111;font-weight:normal;">Very High</div>
<div class="t" style="left:1824px;top:548.34px;font-size:12px;line-height:15px;color:#111;font-weight:normal;">Phone</div>
<div class="t" style="left:1444px;top:566.34px;font-size:12px;line-height:15px;color:#111;font-weight:normal;">18/01/2019</div>
<div class="t" style="left:1512px;top:566.34px;font-size:12px;line-height:15px;color:#111;font-weight:normal;">Peter Godber</div>
<div class="t" style="left:1748px;top:566.34px;font-size:12px;line-height:15px;color:#111;font-weight:normal;">Very High</div>
<div class="t" style="left:1824px;top:566.34px;font-size:12px;line-height:15px;color:#111;font-weight:normal;">Phone</div>
<div class="t" style="left:1444px;top:584.34px;font-size:12px;line-height:15px;color:#111;font-weight:normal;">18/01/2019</div>
<div class="t" style="left:1512px;top:584.34px;font-size:12px;line-height:15px;color:#111;font-weight:normal;">Sue Jardine</div>
<div class="t" style="left:1748px;top:584.34px;font-size:12px;line-height:15px;color:#111;font-weight:normal;">Very High</div>
<div class="t" style="left:1824px;top:584.34px;font-size:12px;line-height:15px;color:#111;font-weight:normal;">Phone</div>
<div class="t" style="left:1444px;top:602.34px;font-size:12px;line-height:15px;color:#111;font-weight:normal;">18/01/2019</div>
<div class="t" style="left:1512px;top:602.34px;font-size:12px;line-height:15px;color:#111;font-weight:normal;">John Penfold</div>
<div class="t" style="left:1748px;top:602.34px;font-size:12px;line-height:15px;color:#111;font-weight:normal;">Very High</div>
<div class="t" style="left:1824px;top:602.34px;font-size:12px;line-height:15px;color:#111;font-weight:normal;">Phone</div>
<div class="t" style="left:1444px;top:620.34px;font-size:12px;line-height:15px;color:#111;font-weight:normal;">18/01/2019</div>
<div class="t" style="left:1512px;top:620.34px;font-size:12px;line-height:15px;color:#111;font-weight:normal;">Janet Stone</div>
<div class="t" style="left:1748px;top:620.34px;font-size:12px;line-height:15px;color:#111;font-weight:normal;">Very High</div>
<div class="t" style="left:1824px;top:620.34px;font-size:12px;line-height:15px;color:#111;font-weight:normal;">Phone</div>
<div class="t" style="left:1444px;top:638.34px;font-size:12px;line-height:15px;color:#111;font-weight:normal;">23/01/2019</div>
<div class="t" style="left:1512px;top:638.34px;font-size:12px;line-height:15px;color:#111;font-weight:normal;">Mary Baker</div>
<div class="t" style="left:1748px;top:638.34px;font-size:12px;line-height:15px;color:#111;font-weight:normal;">Very High</div>
<div class="t" style="left:1824px;top:638.34px;font-size:12px;line-height:15px;color:#111;font-weight:normal;">Phone</div>
<div class="t" style="left:1444px;top:656.34px;font-size:12px;line-height:15px;color:#111;font-weight:normal;">23/01/2019</div>
<div class="t" style="left:1512px;top:656.34px;font-size:12px;line-height:15px;color:#111;font-weight:normal;">Steven Brooks</div>
<div class="t" style="left:1748px;top:656.34px;font-size:12px;line-height:15px;color:#111;font-weight:normal;">Very High</div>
<div class="t" style="left:1824px;top:656.34px;font-size:12px;line-height:15px;color:#111;font-weight:normal;">Phone</div>
<div class="t" style="left:1444px;top:674.34px;font-size:12px;line-height:15px;color:#111;font-weight:normal;">23/01/2019</div>
<div class="t" style="left:1512px;top:674.34px;font-size:12px;line-height:15px;color:#111;font-weight:normal;">Margaret Colbert</div>
<div class="t" style="left:1748px;top:674.34px;font-size:12px;line-height:15px;color:#111;font-weight:normal;">Very High</div>
<div class="t" style="left:1824px;top:674.34px;font-size:12px;line-height:15px;color:#111;font-weight:normal;">Phone</div>
<div class="t" style="left:1444px;top:692.34px;font-size:12px;line-height:15px;color:#111;font-weight:normal;">23/01/2019</div>
<div class="t" style="left:1512px;top:692.34px;font-size:12px;line-height:15px;color:#111;font-weight:normal;">Samantha Diprose</div>
<div class="t" style="left:1748px;top:692.34px;font-size:12px;line-height:15px;color:#111;font-weight:normal;">Very High</div>
<div class="t" style="left:1824px;top:692.34px;font-size:12px;line-height:15px;color:#111;font-weight:normal;">Phone</div>
<div class="t" style="left:1444px;top:709.34px;font-size:12px;line-height:15px;color:#111;font-weight:normal;">23/01/2019</div>
<div class="t" style="left:1512px;top:709.34px;font-size:12px;line-height:15px;color:#111;font-weight:normal;">Melodie Fearn</div>
<div class="t" style="left:1748px;top:709.34px;font-size:12px;line-height:15px;color:#111;font-weight:normal;">Very High</div>
<div class="t" style="left:1824px;top:709.34px;font-size:12px;line-height:15px;color:#111;font-weight:normal;">Phone</div>
<div class="t" style="left:1444px;top:727.34px;font-size:12px;line-height:15px;color:#111;font-weight:normal;">23/01/2019</div>
<div class="t" style="left:1512px;top:727.34px;font-size:12px;line-height:15px;color:#111;font-weight:normal;">Edward Harris</div>
<div class="t" style="left:1748px;top:727.34px;font-size:12px;line-height:15px;color:#111;font-weight:normal;">Very High</div>
<div class="t" style="left:1824px;top:727.34px;font-size:12px;line-height:15px;color:#111;font-weight:normal;">Phone</div>
<div class="t" style="left:1444px;top:745.34px;font-size:12px;line-height:15px;color:#111;font-weight:normal;">23/01/2019</div>
<div class="t" style="left:1512px;top:745.34px;font-size:12px;line-height:15px;color:#111;font-weight:normal;">Cedric Hickinson</div>
<div class="t" style="left:1748px;top:745.34px;font-size:12px;line-height:15px;color:#111;font-weight:normal;">Very High</div>
<div class="t" style="left:1824px;top:745.34px;font-size:12px;line-height:15px;color:#111;font-weight:normal;">Phone</div>
<div class="t" style="left:1444px;top:763.34px;font-size:12px;line-height:15px;color:#111;font-weight:normal;">23/01/2019</div>
<div class="t" style="left:1512px;top:763.34px;font-size:12px;line-height:15px;color:#111;font-weight:normal;">Richard Mayo</div>
<div class="t" style="left:1748px;top:763.34px;font-size:12px;line-height:15px;color:#111;font-weight:normal;">Very High</div>
<div class="t" style="left:1824px;top:763.34px;font-size:12px;line-height:15px;color:#111;font-weight:normal;">Phone</div>
<div class="t" style="left:1444px;top:781.34px;font-size:12px;line-height:15px;color:#111;font-weight:normal;">23/01/2019</div>
<div class="t" style="left:1512px;top:781.34px;font-size:12px;line-height:15px;color:#111;font-weight:normal;">Kirsty Rial</div>
<div class="t" style="left:1748px;top:781.34px;font-size:12px;line-height:15px;color:#111;font-weight:normal;">Very High</div>
<div class="t" style="left:1824px;top:781.34px;font-size:12px;line-height:15px;color:#111;font-weight:normal;">Phone</div>
<div class="t" style="left:1444px;top:799.34px;font-size:12px;line-height:15px;color:#111;font-weight:normal;">23/01/2019</div>
<div class="t" style="left:1512px;top:799.34px;font-size:12px;line-height:15px;color:#111;font-weight:normal;">Wendy Smith</div>
<div class="t" style="left:1748px;top:799.34px;font-size:12px;line-height:15px;color:#111;font-weight:normal;">Very High</div>
<div class="t" style="left:1824px;top:799.34px;font-size:12px;line-height:15px;color:#111;font-weight:normal;">Phone</div>
<div style="left:0px;top:1138px;width:1919px;height:23px;background:#2b579a"></div>
<div style="left:0px;top:1160px;width:1919px;height:1px;background:#1a1a1a"></div>
<div style="left:48px;top:1160px;width:344px;height:1px;background:#d8d8d8"></div>
<div class="t" style="left:3px;top:1142.48px;font-size:11.6px;line-height:14px;color:#fff;font-weight:normal;">Branch: York Opticians</div>
<div class="t" style="left:132.5px;top:1142.48px;font-size:11.6px;line-height:14px;color:#fff;font-weight:normal;">User: System Admin</div>
<div class="t" style="left:251px;top:1142.48px;font-size:11.6px;line-height:14px;color:#8d9bb5;font-weight:normal;">SMS Credits: 169</div>
<svg style="position:absolute;left:1868px;top:1142px" width="16" height="14" viewBox="0 0 16 14"><defs><linearGradient id="gsb" x1="0" y1="0" x2="0" y2="1"><stop offset="0" stop-color="#ffffff"/><stop offset="1" stop-color="#d8e4f2"/></linearGradient></defs><rect x="0" y="0.5" width="15" height="1.5" fill="#3a86e0"/><rect x="0" y="2" width="3" height="11" fill="#ffe000"/><rect x="4" y="2" width="11" height="11" fill="url(#gsb)"/></svg>
<div style="left:1893px;top:1139px;width:21px;height:21px;background:#c2e0f0;border:1px solid #1d4a78"></div>
<div class="t" style="left:1893.5px;width:20px;text-align:center;top:1141.69px;font-size:11px;line-height:14px;color:#000;font-weight:bold;font-family:'Liberation Serif',serif;">Ab</div>
</body></html>
